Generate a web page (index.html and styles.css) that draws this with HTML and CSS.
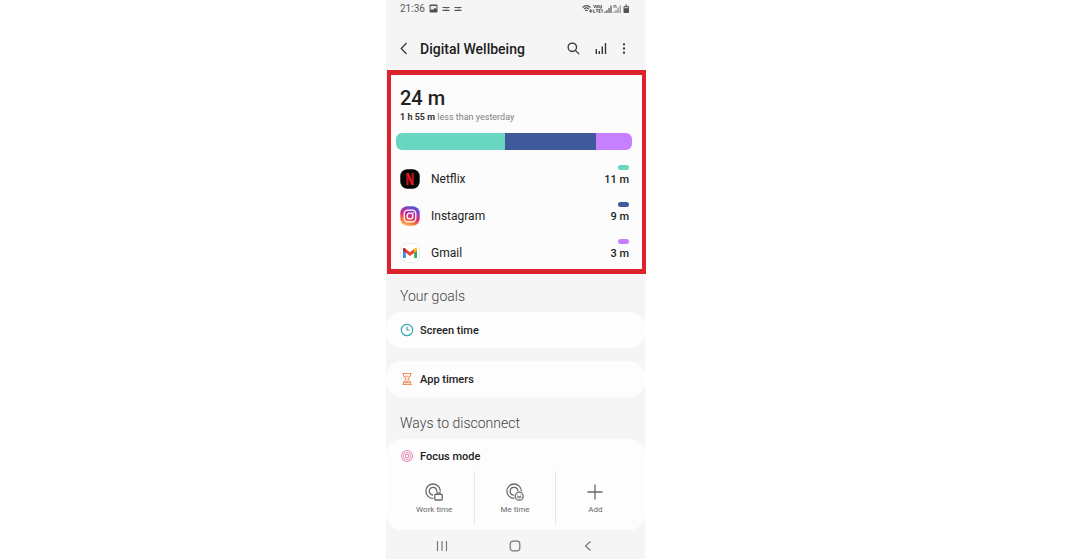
FILE: index.html
```html
<!DOCTYPE html>
<html lang="en">
<head>
<meta charset="utf-8">
<meta name="viewport" content="width=device-width, initial-scale=1">
<title>Digital Wellbeing</title>
<link rel="stylesheet" href="styles.css">
</head>
<body>
<div class="stage">
<div class="phone">
  <div class="status">
    <span class="clock">21:36</span>
    <svg width="9" height="9" viewBox="0 0 9 9"><rect x=".5" y=".5" width="8" height="8" rx="1" fill="#505050"/><path d="M1.500 2h6v3L6 3.800 4 6 3 5 1.500 6.200z" fill="#eee"/></svg>
    <svg width="8" height="6" viewBox="0 0 8 6"><path d="M.5 1.500h7M.5 4.300h7" stroke="#555" stroke-width="1.200"/><path d="M3.500 2.900h2" stroke="#999" stroke-width="1"/></svg>
    <svg width="8" height="6" viewBox="0 0 8 6"><path d="M.5 1.500h7M.5 4.300h7" stroke="#555" stroke-width="1.200"/><path d="M3.500 2.900h2" stroke="#999" stroke-width="1"/></svg>
    <svg class="signals" width="48" height="10" viewBox="0 0 48 10" fill="none" stroke="#555">
      <path d="M.5 3.500q4-3.800 8 0M2 5.200q2.500-2.500 5 0M3.300 6.900q1.200-1.200 2.400 0" stroke-width="1.200"/><path d="M7 7h3.500M8.700 5.300v3.400" stroke-width="1.200"/>
      <g stroke-width=".9"><path d="M11.500 1l1.200 3 1.200-3M14.800 1.500h1.400v2.200h-1.400zM17.800 1v3h1.600V1M11.700 5.500v3h1.500M14 5.500h2M15 5.500v3M18.500 5.500H17v3h1.500M17 7h1.500M19.200 6l1-.5v3"/></g>
      <g stroke-width="1.200"><path d="M23 9V7.500M25 9V6M27 9V4M29 9V1.500"/></g>
      <g stroke-width="1"><path d="M32 4V1.500h2V4M32 9V7.500M34 9V6M36 9V3.500M38.200 9V1.500" stroke="#777"/></g>
      <path d="M42 2.500h4.500v6H42z" fill="#505050"/><path d="M43.200 1.200h2" stroke-width="1"/><path d="M42.300 3.500h4" stroke="#bbb" stroke-width="1.500"/>
    </svg>
  </div>

  <header class="header">
    <button class="icon-btn" aria-label="Back"><svg width="8" height="13" viewBox="0 0 8 13"><path d="M6.500 1 1.200 6.500 6.500 12" fill="none" stroke="#333" stroke-width="1.200"/></svg></button>
    <h1>Digital Wellbeing</h1>
    <button class="icon-btn" aria-label="Search"><svg width="13" height="13" viewBox="0 0 13 13" fill="none" stroke="#333" stroke-width="1.300"><circle cx="5.300" cy="5.300" r="4.200"/><path d="m8.400 8.400 3.700 3.700"/></svg></button>
    <button class="icon-btn" aria-label="Statistics"><svg width="12" height="13" viewBox="0 0 12 13" fill="none" stroke="#333" stroke-width="1.400"><path d="M1.300 12V7M4.300 12V9M7.300 12V4.500M10.500 12V1"/></svg></button>
    <button class="icon-btn" aria-label="More options"><svg width="4" height="13" viewBox="0 0 4 13" fill="#333"><circle cx="2" cy="2.300" r="1.150"/><circle cx="2" cy="6.500" r="1.150"/><circle cx="2" cy="10.700" r="1.150"/></svg></button>
  </header>

  <main>
  <section class="usage">
    <p class="total">24 m</p>
    <p class="compare"><b>1 h 55 m</b> less than yesterday</p>
    <div class="bar"><span class="teal" style="flex-grow:109"></span><span class="blue" style="flex-grow:91"></span><span class="purple" style="flex-grow:36"></span></div>
    <ul class="apps">
      <li>
        <svg width="20" height="20" viewBox="0 0 20 20"><rect x=".3" y=".3" width="19.400" height="19.400" rx="7" fill="#050505"/><path d="M6.300 4h2.300v12H6.300zM11.500 4h2.300v12h-2.300z" fill="#b9121b"/><path d="M6.300 4h2.400l5.100 12h-2.400z" fill="#e51b23"/></svg>
        <span class="name">Netflix</span>
        <span class="time"><i class="teal"></i>11 m</span>
      </li>
      <li>
        <svg width="20" height="20" viewBox="0 0 20 20"><defs><linearGradient id="ig" x1=".2" y1="1" x2=".6" y2="0"><stop offset="0" stop-color="#fcc452"/><stop offset=".25" stop-color="#f5783e"/><stop offset=".5" stop-color="#d92d75"/><stop offset=".75" stop-color="#a036bb"/><stop offset="1" stop-color="#5456d0"/></linearGradient></defs><rect x=".3" y=".3" width="19.400" height="19.400" rx="7" fill="url(#ig)"/><g fill="none" stroke="#fff" stroke-width="1.300"><rect x="4.200" y="4.200" width="11.600" height="11.600" rx="3.500"/><circle cx="10" cy="10" r="2.900"/></g><circle cx="13.300" cy="6.700" r=".8" fill="#fff"/></svg>
        <span class="name">Instagram</span>
        <span class="time"><i class="blue"></i>9 m</span>
      </li>
      <li>
        <svg width="20" height="20" viewBox="0 0 20 20"><rect x=".5" y=".5" width="19" height="19" rx="7" fill="#fff" stroke="#e4e4e4" stroke-width=".8"/><path d="M3 6.500v8.500h2.800V8z" fill="#4285f4"/><path d="M17 6.500v8.500h-2.800V8z" fill="#34a853"/><path d="M5.800 5.900 10 9.300l4.200-3.400v3.800L10 13 5.800 9.700z" fill="#ea4335"/><path d="M3 6.500C3 4.900 4.700 4.600 5.800 5.700v4L3 7.800z" fill="#c5221f"/><path d="M17 6.500c0-1.600-1.700-1.900-2.800-.8v4L17 7.800z" fill="#fbbc04"/></svg>
        <span class="name">Gmail</span>
        <span class="time"><i class="purple"></i>3 m</span>
      </li>
    </ul>
  </section>

  <h2>Your goals</h2>
  <a class="card goal" href="#screen-time">
    <svg width="14" height="14" viewBox="0 0 14 14" fill="none" stroke="#36a9b5" stroke-width="1.200"><circle cx="7" cy="7" r="5.700"/><path d="M7 3.800V7h2.700"/></svg>
    Screen time
  </a>
  <a class="card goal" href="#app-timers">
    <svg width="14" height="14" viewBox="0 0 14 14" fill="none" stroke="#ec9468" stroke-width="1.100"><path d="M2.300 1.500h9.400M2.300 12.500h9.400M3.500 1.500v2.300L6 7l-2.500 3.200v2.300M10.500 1.500v2.300L8 7l2.500 3.200v2.300"/><path d="M5.200 4.300h3.600M5 10.800 7 9.300l2 1.500z"/></svg>
    App timers
  </a>

  <h2 class="ways">Ways to disconnect</h2>
  <section class="card focus">
    <a class="focus-title" href="#focus-mode">
      <svg width="14" height="14" viewBox="0 0 14 14" fill="none" stroke="#e68fb7"><circle cx="7" cy="7" r="5.500" stroke-width="1.100"/><circle cx="7" cy="7" r="3.700" stroke-width=".8"/><circle cx="7" cy="7" r="1.900" stroke-width="1.100"/></svg>
      Focus mode
    </a>
    <div class="modes">
      <button>
        <svg width="18" height="18" viewBox="0 0 18 18" fill="none" stroke="#686868" stroke-width="1.300"><path d="M15.300 8.500A7.200 7.200 0 1 0 8.300 15.400"/><path d="M11.800 8.800A3.800 3.800 0 1 0 8 12"/><rect x="9.800" y="11.300" width="7.400" height="5.700" rx=".8"/><path d="M12 11.300V9.900h3v1.400"/></svg>
        Work time
      </button>
      <button>
        <svg width="18" height="18" viewBox="0 0 18 18" fill="none" stroke="#686868" stroke-width="1.300"><path d="M15.300 8.300A7.200 7.200 0 1 0 8.300 15.400"/><path d="M11.800 8A3.800 3.800 0 1 0 7.800 12"/><circle cx="13.200" cy="13.200" r="4"/><path d="M11.200 13.800q2 2.500 4 0z" stroke-width=".9"/><path d="M11.700 11.500v.9M14.700 11.500v.9" stroke-width=".9"/></svg>
        Me time
      </button>
      <button>
        <svg width="18" height="18" viewBox="0 0 18 18" fill="none" stroke="#686868" stroke-width="1.300"><path d="M9 1.500v15M1.500 9h15"/></svg>
        Add
      </button>
    </div>
  </section>
  </main>

  <nav class="nav">
    <button aria-label="Recent apps"><svg width="12" height="12" viewBox="0 0 12 12" stroke="#777" stroke-width="1.200"><path d="M1.500 1v10M6 1v10M10.500 1v10"/></svg></button>
    <button aria-label="Home"><svg width="12" height="12" viewBox="0 0 12 12" fill="none" stroke="#777" stroke-width="1.200"><rect x="1.200" y="1.200" width="9.600" height="9.600" rx="2.800"/></svg></button>
    <button aria-label="Back"><svg width="12" height="12" viewBox="0 0 12 12" fill="none" stroke="#777" stroke-width="1.200"><path d="M8.500 1.500 3.500 6l5 4.500"/></svg></button>
  </nav>
</div>
</div>
</body>
</html>
```
FILE: styles.css
```css
* { box-sizing: border-box; }
body { margin: 0; background: #fff; font-family: Roboto, "Liberation Sans", sans-serif; color: #222; }
h1, h2, p, ul { margin: 0; padding: 0; font-weight: 400; }
ul { list-style: none; }
svg { display: block; flex: none; }
a { color: inherit; text-decoration: none; }
button { border: 0; padding: 0; background: none; font: inherit; color: inherit; }

.stage { display: grid; grid-template-columns: 386fr minmax(259px, auto) 423fr; }
.phone { grid-column: 2; min-height: 100vh; background: #f5f5f5; display: flex; flex-direction: column; }

.status { display: flex; align-items: center; gap: 4px; height: 17px; padding: 0 15px 0 14px; }
.clock { font-size: 10px; line-height: 16px; color: #555; }
.signals { margin-left: auto; }

.header { display: flex; align-items: center; gap: 15px; height: 53px; padding: 10px 19px 0 14px; }
.header h1 { flex: 1; margin-left: -3px; font-size: 14px; line-height: 20px; font-weight: 500; color: #1c1c1c; }

.usage { margin: 0 -1px 0 1px; padding: 11px 10px 1px 5px; border: solid #dc232c; border-width: 5px 4px; background: #fcfcfc; }
.total { padding-left: 4px; font-size: 20px; line-height: 24px; font-weight: 500; }
.compare { padding-left: 4px; font-size: 9px; line-height: 14px; color: #808080; }
.compare b { font-weight: 700; color: #333; }
.bar { display: flex; height: 17px; margin: 9px 0 13px; border-radius: 6px; overflow: hidden; }
.bar span { flex-basis: 0; }
.teal { background: #68d6c0; }
.blue { background: #40599a; }
.purple { background: #c580ff; }
.apps { display: grid; gap: 6px; padding: 0 3px 0 4px; }
.apps li { display: flex; align-items: center; height: 31px; }
.name { flex: 1; margin-left: 11px; font-size: 12px; line-height: 16px; }
.time { display: flex; flex-direction: column; align-items: flex-end; gap: 3px; padding-bottom: 5px; font-size: 11px; line-height: 14px; font-weight: 500; }
.time i { width: 11px; height: 5px; border-radius: 3px; }

h2 { padding: 12px 14px 6px; font-size: 14px; line-height: 20px; font-weight: 300; color: #444; }
.card { background: #fdfdfd; border-radius: 16px; }
.goal { display: flex; align-items: center; gap: 6px; height: 36px; padding: 0 14px; font-size: 11px; font-weight: 500; }
.goal + .goal { margin-top: 13px; }
.ways { padding-top: 16px; }
.focus { padding: 9px 10px 6px 8px; }
.focus-title { display: flex; align-items: center; gap: 6px; height: 16px; padding-left: 6px; font-size: 11px; font-weight: 500; }
.modes { display: grid; grid-template-columns: repeat(3, 1fr); margin-top: 7px; }
.modes button { display: flex; flex-direction: column; align-items: center; gap: 3px; height: 53px; padding-top: 12px; font-size: 8px; line-height: 12px; color: #686868; }
.modes button + button { border-left: 1px solid #e6e6e6; }

.nav { display: flex; justify-content: space-between; align-items: center; flex: 1; min-height: 28px; padding: 3px 51px 0 50px; }
```
